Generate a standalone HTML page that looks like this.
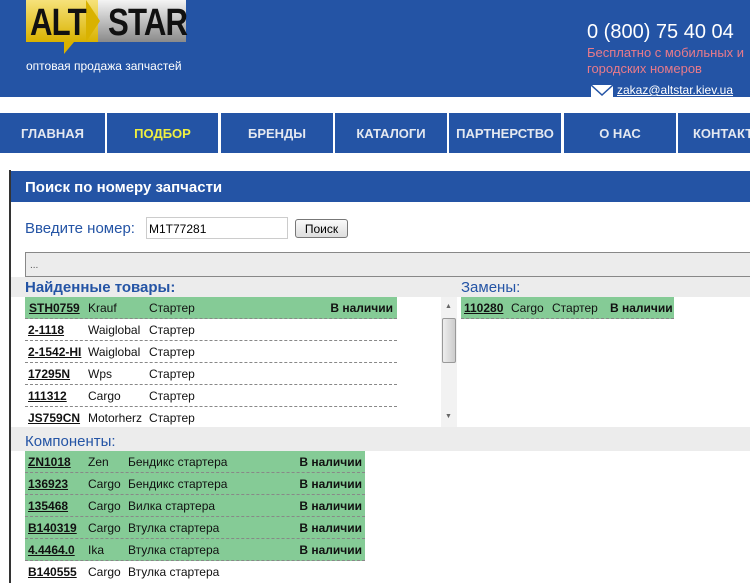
<!DOCTYPE html>
<html><head><meta charset="utf-8"><style>
body{margin:0;width:750px;height:583px;overflow:hidden;background:#fff;font-family:"Liberation Sans",Arial,sans-serif;position:relative}
.abs{position:absolute}
.hdr{left:0;top:0;width:750px;height:97px;background:#2454a5}
.nav{top:113px;height:40px;background:#2454a5;color:#e4e8f0;font-weight:bold;font-size:13px;line-height:42px;text-align:center}
.row{position:absolute;height:22px;line-height:23px;font-size:12px;color:#111;border-bottom:1px dashed #888;box-sizing:border-box}
.row span{position:absolute;top:0}
.row u{font-weight:bold}
.g{background:#85cb96}
.logo{position:absolute;top:2px;font-size:38px;font-weight:bold;color:#111;transform:scale(0.82,1);transform-origin:left top;letter-spacing:-1px}
</style></head><body>
<div class="abs hdr"></div>
<div class="abs" style="left:26px;top:0;width:160px;height:42px;background:linear-gradient(#f4f4f4,#8a8a8a);"></div>
<div class="abs" style="left:26px;top:0;width:72px;height:42px;background:linear-gradient(#f6e27a,#d9b200);"></div>
<div class="abs" style="left:86px;top:0;width:0;height:0;border-top:21px solid transparent;border-bottom:21px solid transparent;border-left:14px solid #d9b200"></div>
<div class="abs" style="left:64px;top:42px;width:0;height:0;border-left:10px solid #d9b200;border-bottom:12px solid transparent"></div>
<div class="logo" style="left:30px">ALT</div>
<div class="logo" style="left:108px">STAR</div>
<div class="abs" style="left:26px;top:59px;font-size:12px;color:#fff">оптовая продажа запчастей</div>
<div class="abs" style="left:587px;top:21px;font-size:20px;color:#fff">0 (800) 75 40 04</div>
<div class="abs" style="left:587px;top:45px;font-size:13px;color:#e87a8a;line-height:16px">Бесплатно с мобильных и<br>городских номеров</div>
<svg class="abs" style="left:591px;top:85px" width="22" height="12"><rect width="22" height="12" fill="#fff"/><path d="M0 0 L11 10 L22 0" stroke="#2454a5" stroke-width="1.5" fill="none"/></svg>
<div class="abs" style="left:617px;top:83px;font-size:12px;color:#fff;text-decoration:underline">zakaz@altstar.kiev.ua</div>

<div class="abs nav" style="left:0;width:105px">ГЛАВНАЯ</div>
<div class="abs nav" style="left:107px;width:111px;color:#f0f040">ПОДБОР</div>
<div class="abs nav" style="left:221px;width:112px">БРЕНДЫ</div>
<div class="abs nav" style="left:335px;width:112px">КАТАЛОГИ</div>
<div class="abs nav" style="left:449px;width:112px">ПАРТНЕРСТВО</div>
<div class="abs nav" style="left:564px;width:112px">О НАС</div>
<div class="abs nav" style="left:678px;width:120px;text-align:left;padding-left:15px">КОНТАКТЫ</div>

<div class="abs" style="left:9px;top:170px;width:2px;height:413px;background:#333"></div>
<div class="abs" style="left:11px;top:171px;width:739px;height:31px;background:#2454a5;color:#fff;font-weight:bold;font-size:15px;line-height:33px;padding-left:14px;box-sizing:border-box">Поиск по номеру запчасти</div>
<div class="abs" style="left:25px;top:220px;font-size:15px;color:#2454a5">Введите номер:</div>
<div class="abs" style="left:146px;top:217px;width:142px;height:22px;border:1px solid #ccc;box-sizing:border-box;font-size:12px;line-height:22px;padding-left:2px">M1T77281</div>
<div class="abs" style="left:295px;top:219px;width:53px;height:19px;border:1px solid #777;border-radius:3px;background:linear-gradient(#fafafa,#ddd);font-size:12px;line-height:19px;text-align:center;box-sizing:border-box">Поиск</div>
<div class="abs" style="left:25px;top:252px;width:725px;height:25px;background:#ececec;border:1px solid #888;border-right:none;box-sizing:border-box;font-size:10px;color:#555;padding:7px 4px">...</div>
<div class="abs" style="left:11px;top:277px;width:739px;height:20px;background:#ececec"></div>
<div class="abs" style="left:25px;top:279px;font-size:15px;font-weight:bold;color:#2454a5">Найденные товары:</div>
<div class="abs" style="left:461px;top:279px;font-size:15px;color:#2454a5">Замены:</div>
<div class="abs" style="left:441px;top:297px;width:16px;height:130px;background:#f2f2f2"></div>
<div class="abs" style="left:445px;top:303px;font-size:7px;color:#666">▲</div>
<div class="abs" style="left:445px;top:413px;font-size:7px;color:#666">▼</div>
<div class="abs" style="left:442px;top:318px;width:14px;height:45px;background:linear-gradient(90deg,#eee,#ccc);border:1px solid #999;border-radius:2px;box-sizing:border-box"></div>
<div class="abs" style="left:11px;top:427px;width:739px;height:24px;background:#ececec"></div>
<div class="abs" style="left:25px;top:433px;font-size:15px;color:#2454a5">Компоненты:</div>

<div class="row g" style="left:25px;top:297px;width:372px"><span style="left:4px"><u>STH0759</u></span><span style="left:63px">Krauf</span><span style="left:124px">Стартер</span><span style="right:4px;font-weight:bold">В наличии</span></div>
<div class="row" style="left:25px;top:319px;width:372px"><span style="left:3px"><u>2-1118</u></span><span style="left:63px">Waiglobal</span><span style="left:124px">Стартер</span></div>
<div class="row" style="left:25px;top:341px;width:372px"><span style="left:3px"><u>2-1542-HI</u></span><span style="left:63px">Waiglobal</span><span style="left:124px">Стартер</span></div>
<div class="row" style="left:25px;top:363px;width:372px"><span style="left:3px"><u>17295N</u></span><span style="left:63px">Wps</span><span style="left:124px">Стартер</span></div>
<div class="row" style="left:25px;top:385px;width:372px"><span style="left:3px"><u>111312</u></span><span style="left:63px">Cargo</span><span style="left:124px">Стартер</span></div>
<div class="row" style="left:25px;top:407px;width:372px;border:none;height:20px;overflow:hidden"><span style="left:3px"><u>JS759CN</u></span><span style="left:63px">Motorherz</span><span style="left:124px">Стартер</span></div>

<div class="row g" style="left:461px;top:297px;width:213px"><span style="left:3px"><u>110280</u></span><span style="left:50px">Cargo</span><span style="left:91px">Стартер</span><span style="left:149px;font-weight:bold">В наличии</span></div>

<div class="row g" style="left:25px;top:451px;width:340px"><span style="left:3px"><u>ZN1018</u></span><span style="left:63px">Zen</span><span style="left:103px">Бендикс стартера</span><span style="right:3px;font-weight:bold">В наличии</span></div>
<div class="row g" style="left:25px;top:473px;width:340px"><span style="left:3px"><u>136923</u></span><span style="left:63px">Cargo</span><span style="left:103px">Бендикс стартера</span><span style="right:3px;font-weight:bold">В наличии</span></div>
<div class="row g" style="left:25px;top:495px;width:340px"><span style="left:3px"><u>135468</u></span><span style="left:63px">Cargo</span><span style="left:103px">Вилка стартера</span><span style="right:3px;font-weight:bold">В наличии</span></div>
<div class="row g" style="left:25px;top:517px;width:340px"><span style="left:3px"><u>B140319</u></span><span style="left:63px">Cargo</span><span style="left:103px">Втулка стартера</span><span style="right:3px;font-weight:bold">В наличии</span></div>
<div class="row g" style="left:25px;top:539px;width:340px"><span style="left:3px"><u>4.4464.0</u></span><span style="left:63px">Ika</span><span style="left:103px">Втулка стартера</span><span style="right:3px;font-weight:bold">В наличии</span></div>
<div class="row" style="left:25px;top:561px;width:340px;border:none"><span style="left:3px"><u>B140555</u></span><span style="left:63px">Cargo</span><span style="left:103px">Втулка стартера</span></div>
</body></html>
